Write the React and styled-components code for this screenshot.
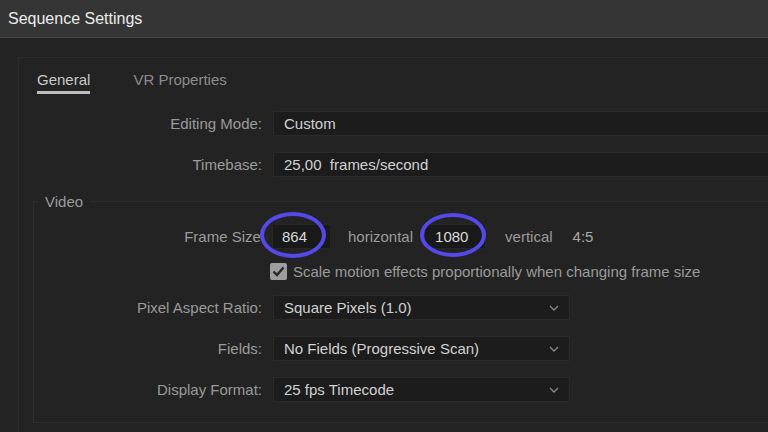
import React from 'react';
import styled, { createGlobalStyle } from 'styled-components';

const GlobalStyle = createGlobalStyle`
  html, body {
    margin: 0;
    padding: 0;
    background: #232323;
  }
  body {
    width: 768px;
    height: 432px;
    overflow: hidden;
    font-family: "Liberation Sans", Arial, sans-serif;
  }
`;

const Window = styled.div`
  width: 768px;
  height: 432px;
  background: #232323;
  overflow: hidden;
  display: flex;
  flex-direction: column;
`;

const TitleBar = styled.div`
  height: 37px;
  flex-shrink: 0;
  background: #353535;
  border-bottom: 1px solid #464646;
  display: flex;
  align-items: center;
  padding-left: 8px;
  color: #ececec;
  font-size: 16px;
`;

const Panel = styled.div`
  margin: 19px 0 0 18px;
  flex: 1;
  border-top: 1px solid #2d2d2d;
  border-left: 1px solid #2d2d2d;
  display: flex;
  flex-direction: column;
`;

const Tabs = styled.div`
  display: flex;
  gap: 43px;
  padding: 13px 0 0 18px;
  height: 22px;
`;

const Tab = styled.div`
  font-size: 15px;
  color: ${(p) => (p.$active ? '#c9c9c9' : '#8c8c8c')};
  height: 20px;
  border-bottom: 3px solid ${(p) => (p.$active ? '#bdbdbd' : 'transparent')};
`;

const Rows = styled.div`
  display: flex;
  flex-direction: column;
  gap: 16px;
  margin-top: ${(p) => p.$top || 0}px;
`;

const Row = styled.div`
  display: flex;
  align-items: center;
  height: 25px;
  gap: 11px;
`;

const Label = styled.div`
  width: ${(p) => p.$w}px;
  flex-shrink: 0;
  text-align: right;
  font-size: 15px;
  color: #9b9b9b;
  white-space: nowrap;
`;

const Field = styled.div`
  height: 25px;
  box-sizing: border-box;
  width: ${(p) => (p.$w ? `${p.$w}px` : 'auto')};
  flex: ${(p) => (p.$w ? 'none' : '1')};
  background: #1c1c1c;
  border: 1px solid #2a2a2a;
  border-right: ${(p) => (p.$w ? '1px solid #2a2a2a' : 'none')};
  display: flex;
  align-items: center;
  justify-content: space-between;
  padding: 0 10px 0 10px;
  font-size: 15px;
  color: #d2d2d2;
  white-space: nowrap;
`;

const Group = styled.fieldset`
  margin: 16px 0 0 14px;
  padding: 0 0 20px 0;
  border: 1px solid #2e2e2e;
  border-right: none;
  min-width: 0;
`;

const Legend = styled.legend`
  margin-left: 4px;
  padding: 0 7px;
  font-size: 15px;
  color: #9b9b9b;
`;

const SizeRow = styled.div`
  display: flex;
  align-items: center;
  height: 25px;
  margin-top: 14px;
`;

const NumberWrap = styled.div`
  position: relative;
  margin-left: ${(p) => p.$ml}px;
`;

const NumberBox = styled.div`
  width: ${(p) => p.$w}px;
  height: 25px;
  box-sizing: border-box;
  background: #191919;
  border: 1px solid #262626;
  display: flex;
  align-items: center;
  padding-left: ${(p) => p.$pl}px;
  font-size: 15px;
  color: #dadada;
`;

/* hand-drawn highlight ring over a number field */
const Ring = styled.div`
  position: absolute;
  left: ${(p) => p.$x}px;
  top: ${(p) => p.$y}px;
  width: ${(p) => p.$w}px;
  height: ${(p) => p.$h}px;
  box-sizing: border-box;
  border: 4px solid #5648ea;
  border-radius: 50%;
  pointer-events: none;
`;

const Word = styled.span`
  margin-left: ${(p) => p.$ml}px;
  font-size: 15px;
  color: ${(p) => p.$c || '#9b9b9b'};
`;

const CheckRow = styled.div`
  display: flex;
  align-items: center;
  height: 20px;
  margin: 12px 0 0 236px;
  gap: 6px;
  font-size: 15px;
  color: #9b9b9b;
  white-space: nowrap;
`;

const CheckBox = styled.div`
  width: 17px;
  height: 17px;
  border-radius: 2px;
  background: #9d9d9d;
  display: flex;
  align-items: center;
  justify-content: center;
`;

const Chevron = () => (
  <svg width="10" height="6" viewBox="0 0 10 6">
    <path d="M1 1l4 4 4-4" fill="none" stroke="#8a8a8a" strokeWidth="1.3" />
  </svg>
);

const Check = () => (
  <svg width="13" height="11" viewBox="0 0 13 11">
    <path d="M1.5 5.5l3.5 3.5 6.5-7.5" fill="none" stroke="#262626" strokeWidth="2.4" />
  </svg>
);

const Select = ({ value }) => (
  <Field $w={297}>
    <span>{value}</span>
    <Chevron />
  </Field>
);

export default function App() {
  return (
    <>
      <GlobalStyle />
      <Window>
        <TitleBar>Sequence Settings</TitleBar>
        <Panel>
          <Tabs>
            <Tab $active>General</Tab>
            <Tab>VR Properties</Tab>
          </Tabs>

          <Rows $top={18}>
            <Row>
              <Label $w={243}>Editing Mode:</Label>
              <Field>Custom</Field>
            </Row>
            <Row>
              <Label $w={243}>Timebase:</Label>
              <Field>25,00&nbsp; frames/second</Field>
            </Row>
          </Rows>

          <Group>
            <Legend>Video</Legend>
            <SizeRow>
              <Label $w={231}>Frame Size:</Label>
              <NumberWrap $ml={7}>
                <NumberBox $w={59} $pl={9}>864</NumberBox>
                <Ring $x={-12} $y={-12} $w={66} $h={46} />
              </NumberWrap>
              <Word $ml={17}>horizontal</Word>
              <NumberWrap $ml={11}>
                <NumberBox $w={62} $pl={10}>1080</NumberBox>
                <Ring $x={-4} $y={-11} $w={66} $h={44} />
              </NumberWrap>
              <Word $ml={19}>vertical</Word>
              <Word $ml={20} $c="#a8a8a8">4:5</Word>
            </SizeRow>

            <CheckRow>
              <CheckBox>
                <Check />
              </CheckBox>
              Scale motion effects proportionally when changing frame size
            </CheckRow>

            <Rows $top={14}>
              <Row>
                <Label $w={228}>Pixel Aspect Ratio:</Label>
                <Select value="Square Pixels (1.0)" />
              </Row>
              <Row>
                <Label $w={228}>Fields:</Label>
                <Select value="No Fields (Progressive Scan)" />
              </Row>
              <Row>
                <Label $w={228}>Display Format:</Label>
                <Select value="25 fps Timecode" />
              </Row>
            </Rows>
          </Group>
        </Panel>
      </Window>
    </>
  );
}
